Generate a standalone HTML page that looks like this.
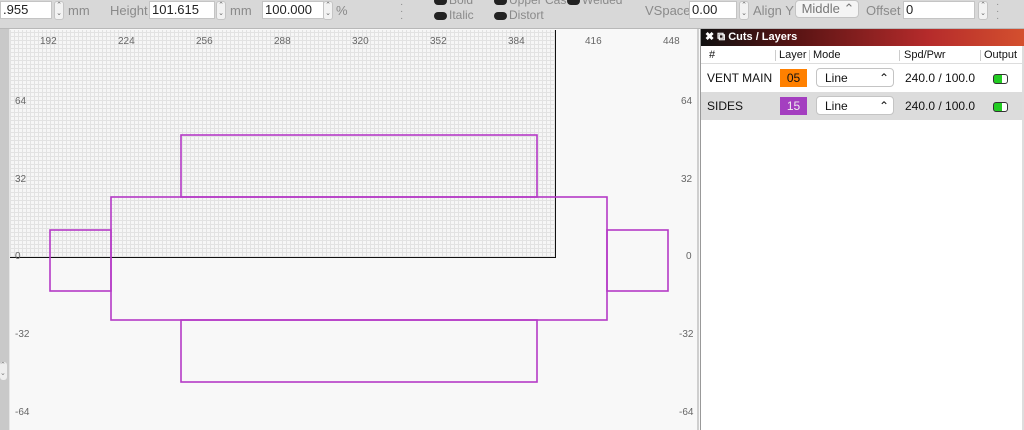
<!DOCTYPE html><html><head><style>
body{margin:0;width:1024px;height:430px;overflow:hidden;background:#f8f8f8;font-family:"Liberation Sans",sans-serif;position:relative}
.a{position:absolute}
.tb{left:0;top:0;width:1024px;height:28px;background:#d8d8d8;border-bottom:1px solid #b8b8b8}
.in{position:absolute;background:#fff;border:1px solid #c4c4c4;height:16px;font-size:13px;line-height:16px;padding-left:2px;color:#222}
.lb{position:absolute;font-size:13px;color:#8a8a8a}
.sp{position:absolute;width:8px;height:17px;border:1px solid #c4c4c4;border-radius:3px;background:#f2f2f2;font-size:7px;line-height:8px;text-align:center;color:#666}
.tg{display:inline-block;width:13px;height:8px;background:#222;border-radius:4px;vertical-align:middle;margin-right:2px}
.grid{left:10px;top:30px;width:545px;height:227px;border-right:1.5px solid #111;border-bottom:1.5px solid #111;background-color:#f6f6f6;background-image:repeating-linear-gradient(90deg,#e2e2e2 0 1px,transparent 1px 4px),repeating-linear-gradient(0deg,#e2e2e2 0 1px,transparent 1px 4px)}
.n{position:absolute;font-size:10px;color:#666}
.pn{left:700px;top:29px;width:324px;height:401px;background:#fff;border-left:1px solid #999}
.row{position:absolute;left:0;width:324px;font-size:12px;color:#111}
.sel{position:absolute;left:115px;width:78px;border:1px solid #c4c4c4;border-radius:4px;background:#fff;font-size:12px;line-height:18px;padding-left:8px;box-sizing:border-box;height:19px}
.led{position:absolute;left:292px;width:13px;height:8px;border:1px solid #333;border-radius:3px;background:linear-gradient(90deg,#2c2 0 60%,#fff 60%)}
</style></head><body>
<div class="a tb"></div>
<div class="in" style="left:0;top:1px;width:48px">.955</div><div class="sp" style="left:54px;top:1px">⌃<br>⌄</div><div class="lb" style="left:68px;top:3px">mm</div>
<div class="lb" style="left:110px;top:3px">Height</div><div class="in" style="left:149px;top:1px;width:62px">101.615</div><div class="sp" style="left:216px;top:1px">⌃<br>⌄</div><div class="lb" style="left:230px;top:3px">mm</div>
<div class="in" style="left:262px;top:1px;width:58px">100.000</div><div class="sp" style="left:323px;top:1px">⌃<br>⌄</div><div class="lb" style="left:336px;top:3px">%</div>
<div class="lb" style="left:400px;top:1px;line-height:7px;font-size:10px">·<br>·<br>·</div>
<div class="lb" style="left:434px;top:-7px;font-size:12px"><span class="tg"></span>Bold</div>
<div class="lb" style="left:434px;top:8px;font-size:12px"><span class="tg"></span>Italic</div>
<div class="lb" style="left:494px;top:-7px;font-size:12px"><span class="tg"></span>Upper Cas</div>
<div class="lb" style="left:567px;top:-7px;font-size:12px"><span class="tg"></span>Welded</div>
<div class="lb" style="left:494px;top:8px;font-size:12px"><span class="tg"></span>Distort</div>
<div class="lb" style="left:645px;top:3px">VSpace</div><div class="in" style="left:689px;top:1px;width:44px">0.00</div><div class="sp" style="left:739px;top:1px">⌃<br>⌄</div>
<div class="lb" style="left:753px;top:3px">Align Y</div><div class="in" style="left:795px;top:0;width:60px;border-radius:4px;background:#f4f4f4;text-align:center;color:#777">Middle ⌃</div>
<div class="lb" style="left:866px;top:3px">Offset</div><div class="in" style="left:903px;top:1px;width:68px">0</div><div class="sp" style="left:978px;top:1px">⌃<br>⌄</div>
<div class="lb" style="left:996px;top:1px;line-height:7px;font-size:10px">·<br>·<br>·</div>
<div class="a" style="left:0;top:29px;width:9px;height:401px;background:#c9c9c9;border-right:1px solid #e6e6e6"></div>
<div class="a" style="left:0;top:362px;width:7px;height:18px;background:#eee;border-radius:3px;font-size:7px;color:#777;line-height:8px">⌃<br>⌄</div>
<div class="a grid"></div>
<div class="a" style="left:683px;top:29px;width:14px;height:401px;background:#f8f8f8;border-right:2px solid #cfcfcf"></div>
<div class="n" style="left:40px;top:36px">192</div><div class="n" style="left:118px;top:36px">224</div><div class="n" style="left:196px;top:36px">256</div><div class="n" style="left:274px;top:36px">288</div><div class="n" style="left:352px;top:36px">320</div><div class="n" style="left:430px;top:36px">352</div><div class="n" style="left:508px;top:36px">384</div><div class="n" style="left:585px;top:36px">416</div><div class="n" style="left:663px;top:36px">448</div>
<div class="n" style="left:15px;top:96px">64</div><div class="n" style="left:15px;top:174px">32</div><div class="n" style="left:15px;top:251px">0</div><div class="n" style="left:15px;top:329px">-32</div><div class="n" style="left:15px;top:407px">-64</div>
<div class="n" style="left:681px;top:96px">64</div><div class="n" style="left:681px;top:174px">32</div><div class="n" style="left:686px;top:251px">0</div><div class="n" style="left:679px;top:329px">-32</div><div class="n" style="left:679px;top:407px">-64</div>
<svg class="a" style="left:0;top:0" width="700" height="430"><g fill="none" stroke="#b53ac6" stroke-width="1.6">
<rect x="181" y="135" width="356" height="62"/>
<rect x="111" y="197" width="496" height="123"/>
<rect x="50" y="230" width="61" height="61"/>
<rect x="607" y="230" width="61" height="61"/>
<rect x="181" y="320" width="356" height="62"/></g></svg>
<div class="a pn">
<div class="a" style="left:0;top:0;width:324px;height:17px;background:linear-gradient(90deg,#111 0%,#5a1414 30%,#b52b2b 70%,#d4502e 100%);color:#fff;font-size:11px;font-weight:bold;line-height:17px"><span style="margin-left:4px">✖ ⧉</span> Cuts / Layers</div>
<div class="row" style="top:19px;height:15px;font-size:11px;line-height:15px;border-bottom:1px solid #ddd"><span class="a" style="left:8px">#</span><span class="a" style="left:78px">Layer</span><span class="a" style="left:112px">Mode</span><span class="a" style="left:203px">Spd/Pwr</span><span class="a" style="left:283px">Output</span>
<span class="a" style="left:74px;top:2px;height:11px;border-left:1px solid #ccc"></span><span class="a" style="left:108px;top:2px;height:11px;border-left:1px solid #ccc"></span><span class="a" style="left:198px;top:2px;height:11px;border-left:1px solid #ccc"></span><span class="a" style="left:279px;top:2px;height:11px;border-left:1px solid #ccc"></span></div>
<div class="row" style="top:35px;height:28px;line-height:28px"><span class="a" style="left:6px">VENT MAIN</span><span class="a" style="left:79px;top:5px;width:27px;height:18px;background:#ff8000;text-align:center;line-height:18px">05</span><div class="sel" style="top:4px">Line<span style="position:absolute;right:4px">⌃</span></div><span class="a" style="left:204px">240.0 / 100.0</span><div class="led" style="top:10px"></div></div>
<div class="row" style="top:63px;height:28px;line-height:28px;background:#dcdcdc"><span class="a" style="left:6px">SIDES</span><span class="a" style="left:79px;top:5px;width:27px;height:18px;background:#a43fc0;color:#eee;text-align:center;line-height:18px">15</span><div class="sel" style="top:4px">Line<span style="position:absolute;right:4px">⌃</span></div><span class="a" style="left:204px">240.0 / 100.0</span><div class="led" style="top:10px"></div></div>
<div class="a" style="left:321px;top:17px;width:3px;height:384px;background:#ddd"></div>
</div>
</body></html>
